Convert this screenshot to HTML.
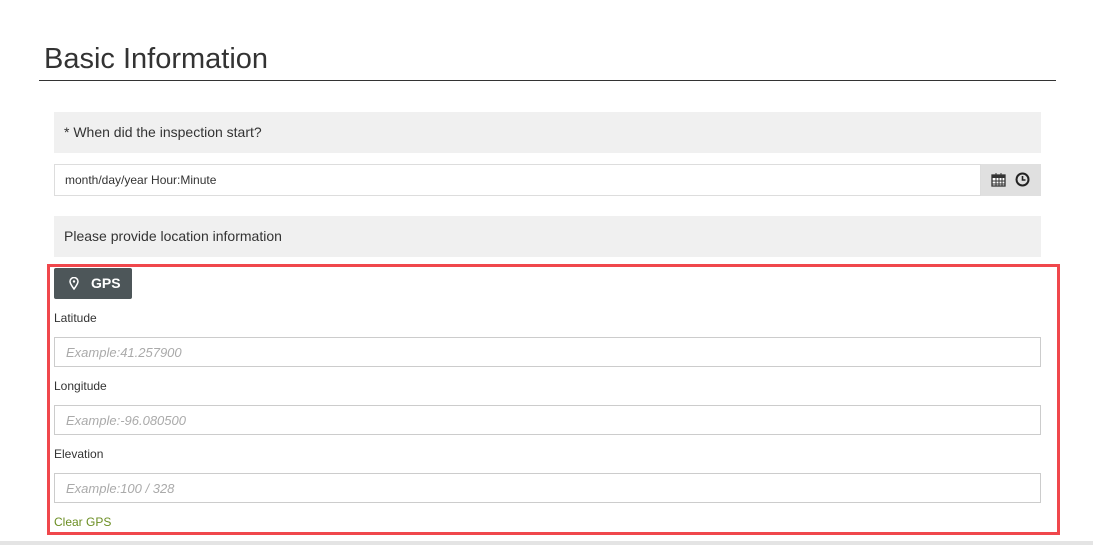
<!DOCTYPE html>
<html><head><style>
*{box-sizing:border-box;margin:0;padding:0}
body{width:1093px;height:545px;background:#fff;font-family:"Liberation Sans",sans-serif;position:relative;overflow:hidden;color:#333}
.a{position:absolute}
.inp{position:absolute;left:54px;width:987px;height:30px;border:1px solid #ccc;background:#fff;font-size:13px;font-style:italic;color:#aaa;padding:7px 11px}
.lbl{position:absolute;left:54px;font-size:12px;color:#333}
</style></head><body>
<div class="a" style="left:44px;top:43px;font-size:29px;color:#333">Basic Information</div>
<div class="a" style="left:39px;top:80px;width:1017px;height:1px;background:#333"></div>
<div class="a" style="left:54px;top:112px;width:987px;height:41px;background:#f0f0f0;font-size:14px;padding:12px 10px;color:#333">* When did the inspection start?</div>
<div class="a" style="left:54px;top:164px;width:927px;height:32px;border:1px solid #ddd;font-size:12px;padding:8px 10px">month/day/year Hour:Minute</div>
<div class="a" style="left:981px;top:164px;width:60px;height:32px;background:#e0e0e0">
<svg class="a" style="left:10px;top:8px" width="15" height="15" viewBox="0 0 15 15"><rect x="1" y="3" width="13" height="11" fill="#fff" stroke="#333" stroke-width="1.3"/><rect x="1" y="3" width="13" height="3" fill="#333"/><path d="M5 1v4M10 1v4M1 9h13M1 12h13M5 6v8M8 6v8M11 6v8" stroke="#333" stroke-width="1"/></svg>
<svg class="a" style="left:34px;top:8px" width="15" height="15" viewBox="0 0 15 15"><circle cx="7.5" cy="7.5" r="6" fill="none" stroke="#222" stroke-width="2"/><path d="M7.5 4v4h3" stroke="#222" stroke-width="1.6" fill="none"/></svg>
</div>
<div class="a" style="left:54px;top:216px;width:987px;height:41px;background:#f0f0f0;font-size:14px;padding:12px 10px;color:#333">Please provide location information</div>
<div class="a" style="left:47px;top:264px;width:1013px;height:271px;border:3px solid #f0474c"></div>
<div class="a" style="left:54px;top:268px;width:78px;height:31px;background:#4d5659;border-radius:2px;color:#fff;font-size:14px;font-weight:bold">
<svg class="a" style="left:15px;top:9px" width="10" height="13" viewBox="0 0 10 13"><path d="M5 12C2 8 1 6 1 4.5a4 4 0 0 1 8 0C9 6 8 8 5 12z" fill="none" stroke="#fff" stroke-width="1.5"/><circle cx="5" cy="4.5" r="1.2" fill="#fff"/></svg>
<span class="a" style="left:37px;top:7px">GPS</span></div>
<div class="lbl" style="top:311px">Latitude</div>
<div class="inp" style="top:337px">Example:41.257900</div>
<div class="lbl" style="top:379px">Longitude</div>
<div class="inp" style="top:405px">Example:-96.080500</div>
<div class="lbl" style="top:447px">Elevation</div>
<div class="inp" style="top:473px">Example:100 / 328</div>
<div class="a" style="left:54px;top:515px;font-size:12px;color:#6b8e23">Clear GPS</div>
<div class="a" style="left:0;top:541px;width:1093px;height:4px;background:#e4e4e4"></div>
</body></html>
